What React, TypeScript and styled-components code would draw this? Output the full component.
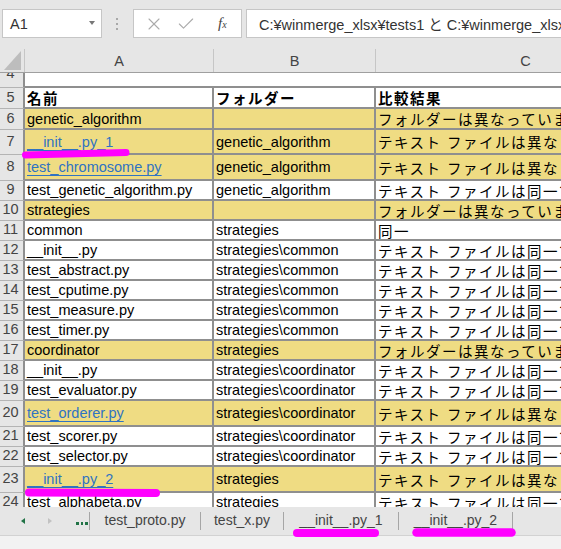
import styled, { createGlobalStyle } from 'styled-components';
import { X, Check } from 'lucide-react';

const GlobalStyle = createGlobalStyle`
  html, body {
    margin: 0;
    padding: 0;
  }
  body {
    width: 561px;
    height: 549px;
    overflow: hidden;
    background: #e6e6e6;
    font-family: 'Liberation Sans', 'Noto Sans CJK JP', sans-serif;
  }
`;

const GRID = '#8f8f8f';
const DIFF = '#efdc83';

const Window = styled.div`
  position: relative;
  width: 561px;
  height: 549px;
  display: flex;
  flex-direction: column;
  overflow: hidden;
  background: #e6e6e6;
`;

/* ---------- formula bar ---------- */

const FormulaBar = styled.div`
  height: 47px;
  flex: none;
  display: flex;
  align-items: flex-start;
  padding: 9px 0 0 2px;
  box-sizing: border-box;
`;

const Field = styled.div`
  height: 29px;
  box-sizing: border-box;
  background: #fff;
  border: 1px solid #c6c6c6;
  display: flex;
  align-items: center;
  color: #333;
  font-size: 14.5px;
`;

const NameBox = styled(Field)`
  width: 100px;
  padding: 0 6px 0 7px;
  justify-content: space-between;
`;

const Caret = styled.span`
  width: 0;
  height: 0;
  border-left: 3.5px solid transparent;
  border-right: 3.5px solid transparent;
  border-top: 4px solid #777;
  margin-top: -2px;
`;

const Grip = styled.div`
  width: 31px;
  height: 29px;
  display: flex;
  flex-direction: column;
  align-items: center;
  justify-content: center;
  gap: 3px;
  padding-right: 1px;
  box-sizing: border-box;

  span {
    width: 2px;
    height: 2px;
    background: #a8a8a8;
  }
`;

const FnBox = styled(Field)`
  width: 109px;
  padding: 0 0 0 10px;
  gap: 12px;
  color: #ababab;
`;

const Fx = styled.span`
  font-family: 'Liberation Serif', serif;
  font-style: italic;
  font-size: 15px;
  color: #444;
  margin-left: 10px;

  sub {
    font-size: 10px;
    vertical-align: 0;
  }
`;

const FormulaInput = styled(Field)`
  flex: 1;
  margin-left: 4px;
  margin-right: -40px;
  padding-left: 12px;
  white-space: nowrap;
  overflow: hidden;
`;

/* ---------- column headers ---------- */

const ColHeaders = styled.div`
  height: 26px;
  flex: none;
  display: grid;
  grid-template-columns: 25px 189px 162px 300px;
  border-bottom: 1px solid #9f9f9f;
  box-sizing: border-box;
`;

const Corner = styled.div`
  position: relative;
  border-right: 1px solid #c6c6c6;
  margin-top: 2px;

  &::after {
    content: '';
    position: absolute;
    right: 3px;
    bottom: 2px;
    border-left: 17px solid transparent;
    border-bottom: 19px solid #bdbdbd;
  }
`;

const ColLabel = styled.div`
  display: flex;
  align-items: center;
  justify-content: center;
  border-right: 1px solid #c6c6c6;
  margin-top: 2px;
  color: #444;
  font-size: 14.5px;
`;

/* ---------- sheet ---------- */

const Sheet = styled.div`
  flex: 1;
  overflow: hidden;
  background: #fff;
`;

const Row = styled.div<{ $h: number }>`
  height: ${(p) => p.$h}px;
  display: grid;
  grid-template-columns: 25px 189px 162px 300px;
`;

const RowNum = styled.div<{ $shift?: number }>`
  background: #e6e6e6;
  border-right: 2px solid ${GRID};
  border-bottom: 1px solid #b4b4b4;
  box-sizing: border-box;
  display: flex;
  align-items: center;
  justify-content: center;
  padding-right: 2px;
  padding-bottom: 3px;
  overflow: hidden;
  color: #444;
  font-size: 14.5px;

  span {
    transform: translateY(${(p) => p.$shift ?? 0}px);
  }
`;

const Cell = styled.div<{ $fill?: boolean; $bold?: boolean; $jp?: boolean; $link?: boolean }>`
  background: ${(p) => (p.$fill ? DIFF : '#fff')};
  border-right: 2px solid ${GRID};
  border-bottom: 2px solid ${GRID};
  box-sizing: border-box;
  display: flex;
  align-items: center;
  padding: 0 2px;
  white-space: nowrap;
  overflow: hidden;
  font-size: 14.5px;
  font-weight: ${(p) => (p.$bold ? 700 : 400)};
  letter-spacing: ${(p) => (p.$jp ? '1.5px' : '0')};
  color: ${(p) => (p.$link ? '#2f73c2' : '#000')};
  text-decoration: ${(p) => (p.$link ? 'underline' : 'none')};
  text-underline-offset: 3px;
`;

const BlankCell = styled.div`
  background: #fff;
  border-bottom: 2px solid ${GRID};
`;

/* ---------- sheet tabs ---------- */

const TabBar = styled.div`
  height: 28px;
  flex: none;
  display: flex;
  align-items: center;
  background: #e6e6e6;
`;

const Nav = styled.div`
  width: 90px;
  height: 18px;
  display: flex;
  align-items: center;
  padding-left: 21px;
  box-sizing: border-box;
  border-right: 1px solid #a6a6a6;
`;

const Arrow = styled.span<{ $dir: 'left' | 'right'; $on?: boolean }>`
  width: 0;
  height: 0;
  border-top: 3.5px solid transparent;
  border-bottom: 3.5px solid transparent;
  ${(p) =>
    p.$dir === 'left'
      ? `border-right: 4px solid ${p.$on ? '#217346' : '#c2c2c2'};`
      : `border-left: 4px solid ${p.$on ? '#217346' : '#c2c2c2'};`}
  margin-right: ${(p) => (p.$dir === 'left' ? 23 : 24)}px;
`;

const More = styled.span`
  display: flex;
  gap: 2px;
  margin-top: 5px;

  i {
    width: 2.5px;
    height: 2.5px;
    background: #217346;
  }
`;

const Tab = styled.div<{ $w: number }>`
  width: ${(p) => p.$w}px;
  flex: none;
  height: 18px;
  display: flex;
  align-items: center;
  justify-content: center;
  padding-bottom: 3px;
  box-sizing: border-box;
  border-right: 1px solid #a6a6a6;
  color: #444;
  font-size: 14px;
  white-space: nowrap;
`;

const StatusStrip = styled.div`
  height: 14px;
  flex: none;
  background: #f2f2f2;
  border-top: 1px solid #d2d2d2;
  box-sizing: border-box;
`;

const Marks = styled.svg`
  position: absolute;
  inset: 0;
  pointer-events: none;
`;

type RowData = {
  n: number;
  a: string;
  b: string;
  c: string;
  h: number;
  fill?: boolean;
  link?: boolean;
  head?: boolean;
};

const FOLDER_DIFF = 'フォルダーは異なっています';
const TEXT_DIFF = 'テキスト ファイルは異なります';
const TEXT_SAME = 'テキスト ファイルは同一です';
const COMMON = 'strategies\\common';
const COORD = 'strategies\\coordinator';

const rows: RowData[] = [
  { n: 5, a: '名前', b: 'フォルダー', c: '比較結果', h: 21, head: true },
  { n: 6, a: 'genetic_algorithm', b: '', c: FOLDER_DIFF, h: 21, fill: true },
  { n: 7, a: '__init__.py_1', b: 'genetic_algorithm', c: TEXT_DIFF, h: 25, fill: true, link: true },
  { n: 8, a: 'test_chromosome.py', b: 'genetic_algorithm', c: TEXT_DIFF, h: 26, fill: true, link: true },
  { n: 9, a: 'test_genetic_algorithm.py', b: 'genetic_algorithm', c: TEXT_SAME, h: 20 },
  { n: 10, a: 'strategies', b: '', c: FOLDER_DIFF, h: 20, fill: true },
  { n: 11, a: 'common', b: 'strategies', c: '同一', h: 20 },
  { n: 12, a: '__init__.py', b: COMMON, c: TEXT_SAME, h: 20 },
  { n: 13, a: 'test_abstract.py', b: COMMON, c: TEXT_SAME, h: 20 },
  { n: 14, a: 'test_cputime.py', b: COMMON, c: TEXT_SAME, h: 20 },
  { n: 15, a: 'test_measure.py', b: COMMON, c: TEXT_SAME, h: 20 },
  { n: 16, a: 'test_timer.py', b: COMMON, c: TEXT_SAME, h: 20 },
  { n: 17, a: 'coordinator', b: 'strategies', c: FOLDER_DIFF, h: 20, fill: true },
  { n: 18, a: '__init__.py', b: COORD, c: TEXT_SAME, h: 20 },
  { n: 19, a: 'test_evaluator.py', b: COORD, c: TEXT_SAME, h: 20 },
  { n: 20, a: 'test_orderer.py', b: COORD, c: TEXT_DIFF, h: 26, fill: true, link: true },
  { n: 21, a: 'test_scorer.py', b: COORD, c: TEXT_SAME, h: 20 },
  { n: 22, a: 'test_selector.py', b: COORD, c: TEXT_SAME, h: 20 },
  { n: 23, a: '__init__.py_2', b: 'strategies', c: TEXT_DIFF, h: 26, fill: true, link: true },
  { n: 24, a: 'test_alphabeta.py', b: 'strategies', c: TEXT_SAME, h: 20 },
];

const isJp = (s: string) => /[^\x00-\x7f]/.test(s);

const tabs = [
  { name: 'test_proto.py', w: 111 },
  { name: 'test_x.py', w: 83 },
  { name: '__init__.py_1', w: 115 },
  { name: '__init__.py_2', w: 114 },
];

export default function App() {
  return (
    <Window>
      <GlobalStyle />
      <FormulaBar>
        <NameBox>
          <span>A1</span>
          <Caret />
        </NameBox>
        <Grip>
          <span />
          <span />
          <span />
        </Grip>
        <FnBox>
          <X size={20} strokeWidth={1.3} />
          <Check size={20} strokeWidth={1.3} />
          <Fx>
            f<sub>x</sub>
          </Fx>
        </FnBox>
        <FormulaInput>C:¥winmerge_xlsx¥tests1 と C:¥winmerge_xlsx¥tests2</FormulaInput>
      </FormulaBar>

      <ColHeaders>
        <Corner />
        <ColLabel>A</ColLabel>
        <ColLabel>B</ColLabel>
        <ColLabel>C</ColLabel>
      </ColHeaders>

      <Sheet>
        <Row $h={15}>
          <RowNum $shift={-6}>
            <span>4</span>
          </RowNum>
          <BlankCell />
          <BlankCell />
          <BlankCell />
        </Row>
        {rows.map((r) => (
          <Row key={r.n} $h={r.h}>
            <RowNum>
              <span>{r.n}</span>
            </RowNum>
            <Cell $fill={r.fill} $bold={r.head} $link={r.link} $jp={isJp(r.a)}>
              {r.a}
            </Cell>
            <Cell $fill={r.fill} $bold={r.head} $jp={isJp(r.b)}>
              {r.b}
            </Cell>
            <Cell $fill={r.fill} $bold={r.head} $jp={isJp(r.c)}>
              {r.c}
            </Cell>
          </Row>
        ))}
      </Sheet>

      <TabBar>
        <Nav>
          <Arrow $dir="left" $on />
          <Arrow $dir="right" />
          <More>
            <i />
            <i />
            <i />
          </More>
        </Nav>
        {tabs.map((t) => (
          <Tab key={t.name} $w={t.w}>
            {t.name}
          </Tab>
        ))}
      </TabBar>
      <StatusStrip />

      <Marks width="561" height="549" viewBox="0 0 561 549">
        <g stroke="#ff00ff" strokeLinecap="round" fill="none">
          <path d="M25.5 155 L126 152.5" strokeWidth="7" />
          <path d="M29 492.5 L156 493" strokeWidth="8" />
          <path d="M297 533 L375 533" strokeWidth="8" />
          <path d="M416.5 532.5 L511.5 532.5" strokeWidth="8.5" />
        </g>
      </Marks>
    </Window>
  );
}
